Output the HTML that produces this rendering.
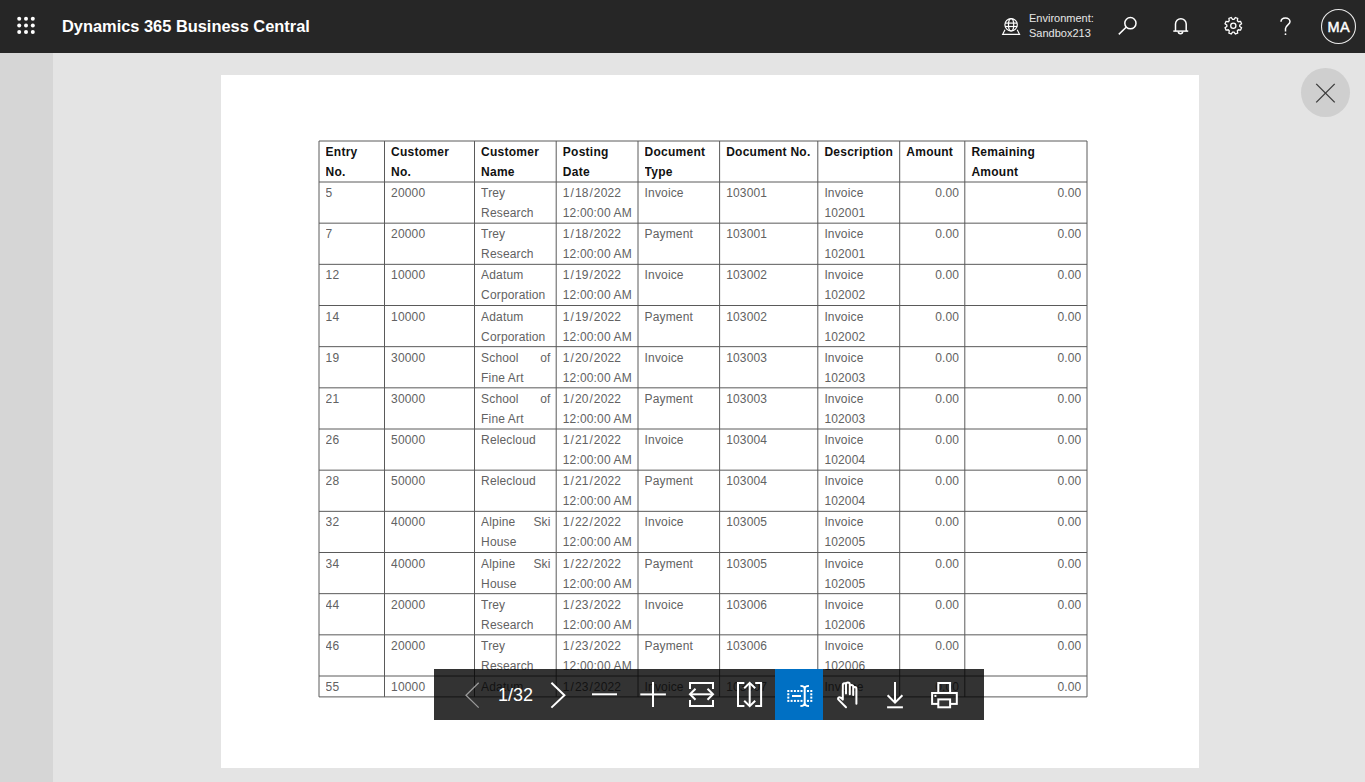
<!DOCTYPE html>
<html><head><meta charset="utf-8">
<style>
*{margin:0;padding:0;box-sizing:border-box}
html,body{width:1365px;height:782px;overflow:hidden;background:#e4e4e4;font-family:"Liberation Sans",sans-serif}
.top{position:absolute;left:0;top:0;width:1365px;height:53px;background:#262626}
.side{position:absolute;left:0;top:53px;width:53px;height:729px;background:#d6d6d6}
.page{position:absolute;left:221px;top:75px;width:978px;height:693px;background:#fff}
.tbl{position:absolute;left:0;top:0;width:1365px;height:782px}
.grid{position:absolute;left:0;top:0}
.c{position:absolute;font-size:12px;line-height:20px;padding-top:1px;overflow:hidden}
.h{font-weight:bold;color:#111;letter-spacing:0.25px}
.b{color:#626262;letter-spacing:0.15px}
.sl{font-style:normal;margin:0 0.9px}
.title{position:absolute;left:62px;top:17px;color:#fff;font-size:16.4px;font-weight:bold;white-space:nowrap}
.env{position:absolute;left:1029px;color:#e6e6e6;font-size:11px;white-space:nowrap;line-height:13px}
.ma{position:absolute;left:1321px;top:10px;width:35px;height:35px;color:#fff;font-size:14.5px;letter-spacing:0.5px;text-indent:0.5px;-webkit-text-stroke:0.45px #fff;text-align:center;line-height:35px}
.closebtn{position:absolute;left:1301px;top:68px;width:49px;height:49px;border-radius:50%;background:#cfcfcf}
.tb{position:absolute;left:434px;top:669px;width:550px;height:51px;background:rgba(0,0,0,0.8)}
.sel{position:absolute;left:775px;top:669px;width:48px;height:51px;background:#0070c4}
.pg{position:absolute;left:498px;top:685px;color:#fff;font-size:18px;white-space:nowrap;line-height:20px}
svg.ov{position:absolute;left:0;top:0}
</style></head>
<body>
<div class="top"></div>
<div class="side"></div>
<div class="page"></div>
<div class="tbl"><svg class="grid" width="1365" height="782" viewBox="0 0 1365 782"><g stroke="#5a5a5a" stroke-width="1"><line x1="319.0" y1="141.0" x2="319.0" y2="696.9"/><line x1="384.5" y1="141.0" x2="384.5" y2="696.9"/><line x1="474.5" y1="141.0" x2="474.5" y2="696.9"/><line x1="556.2" y1="141.0" x2="556.2" y2="696.9"/><line x1="638.0" y1="141.0" x2="638.0" y2="696.9"/><line x1="719.6" y1="141.0" x2="719.6" y2="696.9"/><line x1="817.8" y1="141.0" x2="817.8" y2="696.9"/><line x1="899.7" y1="141.0" x2="899.7" y2="696.9"/><line x1="964.8" y1="141.0" x2="964.8" y2="696.9"/><line x1="1087.0" y1="141.0" x2="1087.0" y2="696.9"/><line x1="319.0" y1="141.0" x2="1087.0" y2="141.0"/><line x1="319.0" y1="182.0" x2="1087.0" y2="182.0"/><line x1="319.0" y1="223.1667" x2="1087.0" y2="223.1667"/><line x1="319.0" y1="264.3334" x2="1087.0" y2="264.3334"/><line x1="319.0" y1="305.5001" x2="1087.0" y2="305.5001"/><line x1="319.0" y1="346.66679999999997" x2="1087.0" y2="346.66679999999997"/><line x1="319.0" y1="387.83349999999996" x2="1087.0" y2="387.83349999999996"/><line x1="319.0" y1="429.0002" x2="1087.0" y2="429.0002"/><line x1="319.0" y1="470.1669" x2="1087.0" y2="470.1669"/><line x1="319.0" y1="511.3336" x2="1087.0" y2="511.3336"/><line x1="319.0" y1="552.5002999999999" x2="1087.0" y2="552.5002999999999"/><line x1="319.0" y1="593.6669999999999" x2="1087.0" y2="593.6669999999999"/><line x1="319.0" y1="634.8336999999999" x2="1087.0" y2="634.8336999999999"/><line x1="319.0" y1="676.0004" x2="1087.0" y2="676.0004"/><line x1="319.0" y1="696.9" x2="1087.0" y2="696.9"/></g></svg><div class="c h" style="left:325.6px;top:141.0px;width:53.3px;height:41.0px;text-align:left">Entry No.</div><div class="c h" style="left:391.1px;top:141.0px;width:77.8px;height:41.0px;text-align:left">Customer No.</div><div class="c h" style="left:481.1px;top:141.0px;width:69.5px;height:41.0px;text-align:left">Customer Name</div><div class="c h" style="left:562.8px;top:141.0px;width:69.6px;height:41.0px;text-align:left">Posting Date</div><div class="c h" style="left:644.6px;top:141.0px;width:69.4px;height:41.0px;text-align:left">Document Type</div><div class="c h" style="left:726.2px;top:141.0px;width:86.0px;height:41.0px;text-align:left">Document No.</div><div class="c h" style="left:824.4px;top:141.0px;width:69.7px;height:41.0px;text-align:left">Description</div><div class="c h" style="left:906.3px;top:141.0px;width:52.9px;height:41.0px;text-align:left">Amount</div><div class="c h" style="left:971.4px;top:141.0px;width:110.0px;height:41.0px;text-align:left">Remaining Amount</div><div class="c b" style="left:325.6px;top:182.0px;width:53.3px;height:41.2px;text-align:left">5</div><div class="c b" style="left:391.1px;top:182.0px;width:77.8px;height:41.2px;text-align:left">20000</div><div class="c b" style="left:481.1px;top:182.0px;width:69.5px;height:41.2px;text-align:justify">Trey Research</div><div class="c b" style="left:562.8px;top:182.0px;width:69.6px;height:41.2px;text-align:left">1<i class="sl">/</i>18<i class="sl">/</i>2022 12:00:00 AM</div><div class="c b" style="left:644.6px;top:182.0px;width:69.4px;height:41.2px;text-align:left">Invoice</div><div class="c b" style="left:726.2px;top:182.0px;width:86.0px;height:41.2px;text-align:left">103001</div><div class="c b" style="left:824.4px;top:182.0px;width:69.7px;height:41.2px;text-align:left">Invoice 102001</div><div class="c b" style="left:906.3px;top:182.0px;width:52.9px;height:41.2px;text-align:right">0.00</div><div class="c b" style="left:971.4px;top:182.0px;width:110.0px;height:41.2px;text-align:right">0.00</div><div class="c b" style="left:325.6px;top:223.2px;width:53.3px;height:41.2px;text-align:left">7</div><div class="c b" style="left:391.1px;top:223.2px;width:77.8px;height:41.2px;text-align:left">20000</div><div class="c b" style="left:481.1px;top:223.2px;width:69.5px;height:41.2px;text-align:justify">Trey Research</div><div class="c b" style="left:562.8px;top:223.2px;width:69.6px;height:41.2px;text-align:left">1<i class="sl">/</i>18<i class="sl">/</i>2022 12:00:00 AM</div><div class="c b" style="left:644.6px;top:223.2px;width:69.4px;height:41.2px;text-align:left">Payment</div><div class="c b" style="left:726.2px;top:223.2px;width:86.0px;height:41.2px;text-align:left">103001</div><div class="c b" style="left:824.4px;top:223.2px;width:69.7px;height:41.2px;text-align:left">Invoice 102001</div><div class="c b" style="left:906.3px;top:223.2px;width:52.9px;height:41.2px;text-align:right">0.00</div><div class="c b" style="left:971.4px;top:223.2px;width:110.0px;height:41.2px;text-align:right">0.00</div><div class="c b" style="left:325.6px;top:264.3px;width:53.3px;height:41.2px;text-align:left">12</div><div class="c b" style="left:391.1px;top:264.3px;width:77.8px;height:41.2px;text-align:left">10000</div><div class="c b" style="left:481.1px;top:264.3px;width:69.5px;height:41.2px;text-align:justify">Adatum Corporation</div><div class="c b" style="left:562.8px;top:264.3px;width:69.6px;height:41.2px;text-align:left">1<i class="sl">/</i>19<i class="sl">/</i>2022 12:00:00 AM</div><div class="c b" style="left:644.6px;top:264.3px;width:69.4px;height:41.2px;text-align:left">Invoice</div><div class="c b" style="left:726.2px;top:264.3px;width:86.0px;height:41.2px;text-align:left">103002</div><div class="c b" style="left:824.4px;top:264.3px;width:69.7px;height:41.2px;text-align:left">Invoice 102002</div><div class="c b" style="left:906.3px;top:264.3px;width:52.9px;height:41.2px;text-align:right">0.00</div><div class="c b" style="left:971.4px;top:264.3px;width:110.0px;height:41.2px;text-align:right">0.00</div><div class="c b" style="left:325.6px;top:305.5px;width:53.3px;height:41.2px;text-align:left">14</div><div class="c b" style="left:391.1px;top:305.5px;width:77.8px;height:41.2px;text-align:left">10000</div><div class="c b" style="left:481.1px;top:305.5px;width:69.5px;height:41.2px;text-align:justify">Adatum Corporation</div><div class="c b" style="left:562.8px;top:305.5px;width:69.6px;height:41.2px;text-align:left">1<i class="sl">/</i>19<i class="sl">/</i>2022 12:00:00 AM</div><div class="c b" style="left:644.6px;top:305.5px;width:69.4px;height:41.2px;text-align:left">Payment</div><div class="c b" style="left:726.2px;top:305.5px;width:86.0px;height:41.2px;text-align:left">103002</div><div class="c b" style="left:824.4px;top:305.5px;width:69.7px;height:41.2px;text-align:left">Invoice 102002</div><div class="c b" style="left:906.3px;top:305.5px;width:52.9px;height:41.2px;text-align:right">0.00</div><div class="c b" style="left:971.4px;top:305.5px;width:110.0px;height:41.2px;text-align:right">0.00</div><div class="c b" style="left:325.6px;top:346.7px;width:53.3px;height:41.2px;text-align:left">19</div><div class="c b" style="left:391.1px;top:346.7px;width:77.8px;height:41.2px;text-align:left">30000</div><div class="c b" style="left:481.1px;top:346.7px;width:69.5px;height:41.2px;text-align:justify">School of Fine Art</div><div class="c b" style="left:562.8px;top:346.7px;width:69.6px;height:41.2px;text-align:left">1<i class="sl">/</i>20<i class="sl">/</i>2022 12:00:00 AM</div><div class="c b" style="left:644.6px;top:346.7px;width:69.4px;height:41.2px;text-align:left">Invoice</div><div class="c b" style="left:726.2px;top:346.7px;width:86.0px;height:41.2px;text-align:left">103003</div><div class="c b" style="left:824.4px;top:346.7px;width:69.7px;height:41.2px;text-align:left">Invoice 102003</div><div class="c b" style="left:906.3px;top:346.7px;width:52.9px;height:41.2px;text-align:right">0.00</div><div class="c b" style="left:971.4px;top:346.7px;width:110.0px;height:41.2px;text-align:right">0.00</div><div class="c b" style="left:325.6px;top:387.8px;width:53.3px;height:41.2px;text-align:left">21</div><div class="c b" style="left:391.1px;top:387.8px;width:77.8px;height:41.2px;text-align:left">30000</div><div class="c b" style="left:481.1px;top:387.8px;width:69.5px;height:41.2px;text-align:justify">School of Fine Art</div><div class="c b" style="left:562.8px;top:387.8px;width:69.6px;height:41.2px;text-align:left">1<i class="sl">/</i>20<i class="sl">/</i>2022 12:00:00 AM</div><div class="c b" style="left:644.6px;top:387.8px;width:69.4px;height:41.2px;text-align:left">Payment</div><div class="c b" style="left:726.2px;top:387.8px;width:86.0px;height:41.2px;text-align:left">103003</div><div class="c b" style="left:824.4px;top:387.8px;width:69.7px;height:41.2px;text-align:left">Invoice 102003</div><div class="c b" style="left:906.3px;top:387.8px;width:52.9px;height:41.2px;text-align:right">0.00</div><div class="c b" style="left:971.4px;top:387.8px;width:110.0px;height:41.2px;text-align:right">0.00</div><div class="c b" style="left:325.6px;top:429.0px;width:53.3px;height:41.2px;text-align:left">26</div><div class="c b" style="left:391.1px;top:429.0px;width:77.8px;height:41.2px;text-align:left">50000</div><div class="c b" style="left:481.1px;top:429.0px;width:69.5px;height:41.2px;text-align:justify">Relecloud</div><div class="c b" style="left:562.8px;top:429.0px;width:69.6px;height:41.2px;text-align:left">1<i class="sl">/</i>21<i class="sl">/</i>2022 12:00:00 AM</div><div class="c b" style="left:644.6px;top:429.0px;width:69.4px;height:41.2px;text-align:left">Invoice</div><div class="c b" style="left:726.2px;top:429.0px;width:86.0px;height:41.2px;text-align:left">103004</div><div class="c b" style="left:824.4px;top:429.0px;width:69.7px;height:41.2px;text-align:left">Invoice 102004</div><div class="c b" style="left:906.3px;top:429.0px;width:52.9px;height:41.2px;text-align:right">0.00</div><div class="c b" style="left:971.4px;top:429.0px;width:110.0px;height:41.2px;text-align:right">0.00</div><div class="c b" style="left:325.6px;top:470.2px;width:53.3px;height:41.2px;text-align:left">28</div><div class="c b" style="left:391.1px;top:470.2px;width:77.8px;height:41.2px;text-align:left">50000</div><div class="c b" style="left:481.1px;top:470.2px;width:69.5px;height:41.2px;text-align:justify">Relecloud</div><div class="c b" style="left:562.8px;top:470.2px;width:69.6px;height:41.2px;text-align:left">1<i class="sl">/</i>21<i class="sl">/</i>2022 12:00:00 AM</div><div class="c b" style="left:644.6px;top:470.2px;width:69.4px;height:41.2px;text-align:left">Payment</div><div class="c b" style="left:726.2px;top:470.2px;width:86.0px;height:41.2px;text-align:left">103004</div><div class="c b" style="left:824.4px;top:470.2px;width:69.7px;height:41.2px;text-align:left">Invoice 102004</div><div class="c b" style="left:906.3px;top:470.2px;width:52.9px;height:41.2px;text-align:right">0.00</div><div class="c b" style="left:971.4px;top:470.2px;width:110.0px;height:41.2px;text-align:right">0.00</div><div class="c b" style="left:325.6px;top:511.3px;width:53.3px;height:41.2px;text-align:left">32</div><div class="c b" style="left:391.1px;top:511.3px;width:77.8px;height:41.2px;text-align:left">40000</div><div class="c b" style="left:481.1px;top:511.3px;width:69.5px;height:41.2px;text-align:justify">Alpine Ski House</div><div class="c b" style="left:562.8px;top:511.3px;width:69.6px;height:41.2px;text-align:left">1<i class="sl">/</i>22<i class="sl">/</i>2022 12:00:00 AM</div><div class="c b" style="left:644.6px;top:511.3px;width:69.4px;height:41.2px;text-align:left">Invoice</div><div class="c b" style="left:726.2px;top:511.3px;width:86.0px;height:41.2px;text-align:left">103005</div><div class="c b" style="left:824.4px;top:511.3px;width:69.7px;height:41.2px;text-align:left">Invoice 102005</div><div class="c b" style="left:906.3px;top:511.3px;width:52.9px;height:41.2px;text-align:right">0.00</div><div class="c b" style="left:971.4px;top:511.3px;width:110.0px;height:41.2px;text-align:right">0.00</div><div class="c b" style="left:325.6px;top:552.5px;width:53.3px;height:41.2px;text-align:left">34</div><div class="c b" style="left:391.1px;top:552.5px;width:77.8px;height:41.2px;text-align:left">40000</div><div class="c b" style="left:481.1px;top:552.5px;width:69.5px;height:41.2px;text-align:justify">Alpine Ski House</div><div class="c b" style="left:562.8px;top:552.5px;width:69.6px;height:41.2px;text-align:left">1<i class="sl">/</i>22<i class="sl">/</i>2022 12:00:00 AM</div><div class="c b" style="left:644.6px;top:552.5px;width:69.4px;height:41.2px;text-align:left">Payment</div><div class="c b" style="left:726.2px;top:552.5px;width:86.0px;height:41.2px;text-align:left">103005</div><div class="c b" style="left:824.4px;top:552.5px;width:69.7px;height:41.2px;text-align:left">Invoice 102005</div><div class="c b" style="left:906.3px;top:552.5px;width:52.9px;height:41.2px;text-align:right">0.00</div><div class="c b" style="left:971.4px;top:552.5px;width:110.0px;height:41.2px;text-align:right">0.00</div><div class="c b" style="left:325.6px;top:593.7px;width:53.3px;height:41.2px;text-align:left">44</div><div class="c b" style="left:391.1px;top:593.7px;width:77.8px;height:41.2px;text-align:left">20000</div><div class="c b" style="left:481.1px;top:593.7px;width:69.5px;height:41.2px;text-align:justify">Trey Research</div><div class="c b" style="left:562.8px;top:593.7px;width:69.6px;height:41.2px;text-align:left">1<i class="sl">/</i>23<i class="sl">/</i>2022 12:00:00 AM</div><div class="c b" style="left:644.6px;top:593.7px;width:69.4px;height:41.2px;text-align:left">Invoice</div><div class="c b" style="left:726.2px;top:593.7px;width:86.0px;height:41.2px;text-align:left">103006</div><div class="c b" style="left:824.4px;top:593.7px;width:69.7px;height:41.2px;text-align:left">Invoice 102006</div><div class="c b" style="left:906.3px;top:593.7px;width:52.9px;height:41.2px;text-align:right">0.00</div><div class="c b" style="left:971.4px;top:593.7px;width:110.0px;height:41.2px;text-align:right">0.00</div><div class="c b" style="left:325.6px;top:634.8px;width:53.3px;height:41.2px;text-align:left">46</div><div class="c b" style="left:391.1px;top:634.8px;width:77.8px;height:41.2px;text-align:left">20000</div><div class="c b" style="left:481.1px;top:634.8px;width:69.5px;height:41.2px;text-align:justify">Trey Research</div><div class="c b" style="left:562.8px;top:634.8px;width:69.6px;height:41.2px;text-align:left">1<i class="sl">/</i>23<i class="sl">/</i>2022 12:00:00 AM</div><div class="c b" style="left:644.6px;top:634.8px;width:69.4px;height:41.2px;text-align:left">Payment</div><div class="c b" style="left:726.2px;top:634.8px;width:86.0px;height:41.2px;text-align:left">103006</div><div class="c b" style="left:824.4px;top:634.8px;width:69.7px;height:41.2px;text-align:left">Invoice 102006</div><div class="c b" style="left:906.3px;top:634.8px;width:52.9px;height:41.2px;text-align:right">0.00</div><div class="c b" style="left:971.4px;top:634.8px;width:110.0px;height:41.2px;text-align:right">0.00</div><div class="c b" style="left:325.6px;top:676.0px;width:53.3px;height:20.9px;text-align:left">55</div><div class="c b" style="left:391.1px;top:676.0px;width:77.8px;height:20.9px;text-align:left">10000</div><div class="c b" style="left:481.1px;top:676.0px;width:69.5px;height:20.9px;text-align:justify">Adatum Corporation</div><div class="c b" style="left:562.8px;top:676.0px;width:69.6px;height:20.9px;text-align:left">1<i class="sl">/</i>23<i class="sl">/</i>2022 12:00:00 AM</div><div class="c b" style="left:644.6px;top:676.0px;width:69.4px;height:20.9px;text-align:left">Invoice</div><div class="c b" style="left:726.2px;top:676.0px;width:86.0px;height:20.9px;text-align:left">103007</div><div class="c b" style="left:824.4px;top:676.0px;width:69.7px;height:20.9px;text-align:left">Invoice 102007</div><div class="c b" style="left:906.3px;top:676.0px;width:52.9px;height:20.9px;text-align:right">0.00</div><div class="c b" style="left:971.4px;top:676.0px;width:110.0px;height:20.9px;text-align:right">0.00</div></div>
<div class="title">Dynamics 365 Business Central</div>
<div class="env" style="top:12px">Environment:</div>
<div class="env" style="top:27px">Sandbox213</div>
<div class="ma">MA</div>
<div class="closebtn"></div>
<div class="tb"></div>
<div class="sel"></div>
<div class="pg">1/32</div>
<svg class="ov" width="1365" height="782" viewBox="0 0 1365 782">
 <g fill="#fff">
  <circle cx="19.2" cy="18.8" r="2"/><circle cx="26" cy="18.8" r="2"/><circle cx="32.8" cy="18.8" r="2"/>
  <circle cx="19.2" cy="25.4" r="2"/><circle cx="26" cy="25.4" r="2"/><circle cx="32.8" cy="25.4" r="2"/>
  <circle cx="19.2" cy="32" r="2"/><circle cx="26" cy="32" r="2"/><circle cx="32.8" cy="32" r="2"/>
 </g>
 <g fill="none" stroke="#fff" stroke-width="1.2">
  <!-- globe -->
  <circle cx="1011.1" cy="24.8" r="6.2"/>
  <ellipse cx="1011.1" cy="24.8" rx="2.6" ry="6.2"/>
  <line x1="1005" y1="23.1" x2="1017.2" y2="23.1"/>
  <line x1="1005" y1="26.5" x2="1017.2" y2="26.5"/>
  <path d="M1005 29.8 L1002.7 34.3 H1019.5 L1017.2 29.8"/>
 </g>
 <g fill="none" stroke="#fff" stroke-width="1.5">
  <!-- search -->
  <circle cx="1130.4" cy="23.2" r="5.6"/>
  <line x1="1118.8" y1="34.4" x2="1126.4" y2="27"/>
  <!-- bell -->
  <path d="M1175.5 31 V24 A5.35 5.35 0 0 1 1186.2 24 V31"/>
  <line x1="1173.3" y1="31.1" x2="1188.2" y2="31.1"/>
  <path d="M1178.3 31.6 A2.2 2.2 0 0 0 1182.7 31.6"/>
  <!-- question -->
  <path d="M1281 21.8 C1281 19.2 1283 17.9 1285.5 17.9 C1288 17.9 1290 19.5 1290 21.8 C1290 24.5 1285.5 25.3 1285.5 28.6 V31.6"/>
 </g>
 <circle cx="1285.5" cy="34.2" r="0.9" fill="#fff"/>
 <!-- gear -->
 <g fill="none" stroke="#fff" stroke-width="1.3">
  <path id="gear" d="M1235.35 17.50 L1237.68 18.47 L1237.36 20.68 L1238.37 21.69 L1240.58 21.37 L1241.55 23.70 L1239.76 25.04 L1239.76 26.46 L1241.55 27.80 L1240.58 30.13 L1238.37 29.81 L1237.36 30.82 L1237.68 33.03 L1235.35 34.00 L1234.01 32.21 L1232.59 32.21 L1231.25 34.00 L1228.92 33.03 L1229.24 30.82 L1228.23 29.81 L1226.02 30.13 L1225.05 27.80 L1226.84 26.46 L1226.84 25.04 L1225.05 23.70 L1226.02 21.37 L1228.23 21.69 L1229.24 20.68 L1228.92 18.47 L1231.25 17.50 L1232.59 19.29 L1234.01 19.29 Z"/>
  <circle cx="1233.3" cy="25.75" r="2.6"/>
 </g>
 <!-- avatar -->
 <circle cx="1338.5" cy="26.5" r="17" fill="none" stroke="#e8e8e8" stroke-width="1.1"/>
 <!-- close X -->
 <g stroke="#3a3a3a" stroke-width="1.3">
  <line x1="1316.2" y1="83.9" x2="1334.7" y2="102.4"/>
  <line x1="1334.7" y1="83.9" x2="1316.2" y2="102.4"/>
 </g>
 <!-- toolbar icons -->
 <path d="M478.7 682.7 L466 695.2 L478.7 707.6" fill="none" stroke="#9a9a9a" stroke-width="1.3"/>
 <g fill="none" stroke="#fff" stroke-width="2">
  <path d="M551.4 682.7 L564.4 695.2 L551.4 707.6"/>
  <line x1="592" y1="694.3" x2="617" y2="694.3"/>
  <line x1="640.3" y1="694.4" x2="665.9" y2="694.4"/>
  <line x1="653" y1="682" x2="653" y2="707"/>
  <!-- fit width -->
  <path d="M690 689 V683 H713 V689"/>
  <path d="M690 700 V706 H713 V700"/>
  <path d="M690.5 694.3 H712.5"/>
  <path d="M695.5 688.8 L690 694.3 L695.5 699.8"/>
  <path d="M707.5 688.8 L713 694.3 L707.5 699.8"/>
  <!-- fit height -->
  <path d="M744.4 683 H738 V706 H744.4"/>
  <path d="M755.2 683 H761.1 V706 H755.2"/>
  <path d="M749.7 683 V706"/>
  <path d="M744.2 688.3 L749.7 682.8 L755.2 688.3"/>
  <path d="M744.2 700.7 L749.7 706.2 L755.2 700.7"/>
  <!-- select text -->
  <path d="M792 696 H801"/>
  <path d="M804.7 687 V705"/>
  <path d="M800.4 685.9 C802.6 685.9 804.7 686.4 804.7 688.6 C804.7 686.4 806.8 685.9 809 685.9" stroke-width="1.8"/>
  <path d="M800.4 706 C802.6 706 804.7 705.5 804.7 703.3 C804.7 705.5 806.8 706 809 706" stroke-width="1.8"/>
  <!-- hand -->
  <path d="M846 707.2 L838.7 699.9 C837.6 698.8 837.9 697.3 839.4 697.3 C840.8 697.3 841.8 698.6 842.8 699.6 V685.4 Q842.8 683.3 844.4 683.3 Q846 683.3 846 685.4 V693.5 M846 685 V684.5 Q846 682.6 847.9 682.6 Q849.8 682.6 849.8 684.5 V694.3 M849.8 686.6 Q849.8 684.9 851.5 684.9 Q853.2 684.9 853.2 686.6 V695 M853.2 688.7 Q853.2 687 854.8 687 Q856.4 687 856.4 688.7 V703.7" stroke-linecap="round" stroke-linejoin="round"/>
  <!-- download -->
  <path d="M895 682 V702.5"/>
  <path d="M887.6 695.2 L895 702.6 L902.4 695.2"/>
  <path d="M887.1 707.3 H902.9"/>
  <!-- print -->
  <path d="M938.3 692.5 V683.1 H950.1 V692.5"/>
  <rect x="932.1" y="693" width="24.7" height="10.9"/>
 </g>
 <rect x="938.3" y="699.4" width="11.8" height="7.9" fill="#333" stroke="#fff" stroke-width="2"/>
 <rect x="934.4" y="694.9" width="2" height="2" fill="#fff"/>
 <g fill="#fff"><rect x="787.3" y="690.0" width="2" height="2"/><rect x="787.3" y="699.9" width="2" height="2"/><rect x="790.6" y="690.0" width="2" height="2"/><rect x="790.6" y="699.9" width="2" height="2"/><rect x="793.9" y="690.0" width="2" height="2"/><rect x="793.9" y="699.9" width="2" height="2"/><rect x="797.2" y="690.0" width="2" height="2"/><rect x="797.2" y="699.9" width="2" height="2"/><rect x="800.5" y="690.0" width="2" height="2"/><rect x="800.5" y="699.9" width="2" height="2"/><rect x="807.0" y="690.0" width="2" height="2"/><rect x="807.0" y="699.9" width="2" height="2"/><rect x="810.3" y="690.0" width="2" height="2"/><rect x="810.3" y="699.9" width="2" height="2"/><rect x="787.3" y="693.3" width="2" height="2"/><rect x="787.3" y="696.6" width="2" height="2"/><rect x="810.3" y="693.3" width="2" height="2"/><rect x="810.3" y="696.6" width="2" height="2"/></g>
</svg>
</body></html>
